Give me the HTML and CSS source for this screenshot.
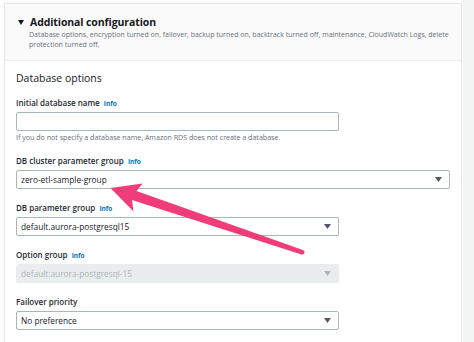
FILE: index.html
```html
<!DOCTYPE html>
<html>
<head>
<meta charset="utf-8">
<link rel="stylesheet" href="styles.css">
</head>
<body>
<div class="page">
  <div class="panel">
    <div class="header">
      <div class="title-row">
        <svg class="caret-down" width="6" height="5" viewBox="0 0 6 5"><polygon points="0,0 6,0 3,5" fill="#16191f"/></svg>
        <span class="title">Additional configuration</span>
      </div>
      <p class="desc">Database options, encryption turned on, failover, backup turned on, backtrack turned off, maintenance, CloudWatch Logs, delete protection turned off.</p>
    </div>
    <div class="content">
      <h2 class="section">Database options</h2>
      <div class="form">
        <div class="field">
          <div class="label">Initial database name <span class="info">Info</span></div>
          <div class="input short"></div>
          <div class="hint">If you do not specify a database name, Amazon RDS does not create a database.</div>
        </div>
        <div class="field">
          <div class="label">DB cluster parameter group <span class="info">Info</span></div>
          <div class="select wide"><span>zero-etl-sample-group</span><svg width="7" height="5" viewBox="0 0 7 5"><polygon points="0,0 7,0 3.5,5" fill="#545b64"/></svg></div>
        </div>
        <div class="field">
          <div class="label">DB parameter group <span class="info">Info</span></div>
          <div class="select short"><span>default.aurora-postgresql15</span><svg width="7" height="5" viewBox="0 0 7 5"><polygon points="0,0 7,0 3.5,5" fill="#545b64"/></svg></div>
        </div>
        <div class="field">
          <div class="label">Option group <span class="info">Info</span></div>
          <div class="select short disabled"><span>default:aurora-postgresql-15</span><svg width="7" height="5" viewBox="0 0 7 5"><polygon points="0,0 7,0 3.5,5" fill="#aab7b8"/></svg></div>
        </div>
        <div class="field">
          <div class="label">Failover priority</div>
          <div class="select short"><span>No preference</span><svg width="7" height="5" viewBox="0 0 7 5"><polygon points="0,0 7,0 3.5,5" fill="#545b64"/></svg></div>
        </div>
      </div>
    </div>
  </div>
  <div class="strip"></div>
</div>
<svg class="arrow" width="474" height="342" viewBox="0 0 474 342">
  <polygon fill="#f03c78" points="110.5,188 142.5,183.5 136.5,191 302.8,250 301.6,254.5 132,200 133.5,211.5"/>
  <circle cx="302.2" cy="252.2" r="2.3" fill="#f03c78"/>
</svg>
</body>
</html>
```
FILE: styles.css
```css
* { box-sizing: border-box; }
html, body { margin: 0; padding: 0; background: #ffffff; }
body {
  font-family: "Open Sans", "Noto Sans", sans-serif;
  color: #16191f;
  width: 474px;
  height: 342px;
  overflow: hidden;
  position: relative;
}
.page {
  display: flex;
  height: 342px;
  padding-top: 3px;
}
.panel {
  margin-left: 4px;
  width: 458px;
  border: 1px solid #e4e7e8;
  border-bottom: none;
  background: #ffffff;
}
.strip {
  margin-left: 1px;
  flex: 1;
  background: #f2f3f3;
  margin-top: -3px;
}
.header {
  background: #fafafa;
  border-bottom: 1px solid #eaeded;
  padding: 11px 10px 11px 12px;
  height: 57px;
}
.title-row {
  display: flex;
  align-items: center;
  height: 14px;
}
.caret-down { margin-right: 6px; margin-left: 1px; }
.title {
  font-size: 10.5px;
  font-weight: 700;
  line-height: 14px;
  letter-spacing: -0.1px;
}
.desc {
  margin: 1px 0 0 12px;
  font-size: 7px;
  line-height: 9.5px;
  color: #687078;
}
.content {
  padding: 10px 11px 0 11px;
}
.section {
  margin: 0;
  font-size: 10.5px;
  font-weight: 400;
  line-height: 14px;
}
.form {
  display: flex;
  flex-direction: column;
  gap: 13px;
  margin-top: 12px;
}
.field {
  display: flex;
  flex-direction: column;
}
.label {
  display: flex;
  align-items: baseline;
  height: 11px;
  font-size: 8px;
  font-weight: 600;
  line-height: 11px;
  margin-bottom: 4px;
  white-space: pre;
  color: #232a33;
}
.info {
  font-size: 6.5px;
  font-weight: 700;
  line-height: 11px;
  color: #0073bb;
  margin-left: 2px;
}
.input, .select {
  height: 19px;
  border: 1px solid #aab7b8;
  border-radius: 2px;
  background: #ffffff;
}
.short { width: 323px; }
.wide { width: 434px; }
.select {
  display: flex;
  align-items: center;
  justify-content: space-between;
  padding: 0 7px 0 4px;
  font-size: 8.3px;
}
.select.disabled {
  background: #eaeded;
  border-color: #eaeded;
  color: #aab7b8;
}
.hint {
  margin-top: 2px;
  font-size: 7.1px;
  line-height: 9px;
  color: #687078;
}
.arrow {
  position: absolute;
  left: 0;
  top: 0;
  pointer-events: none;
}
```
